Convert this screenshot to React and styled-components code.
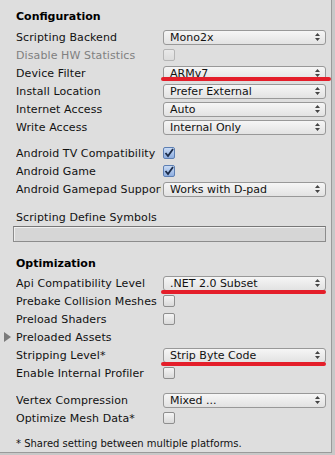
import React from "react";
import styled, { createGlobalStyle } from "styled-components";

// Global page styles
const GlobalStyle = createGlobalStyle`
  body {
    margin: 0;
    background: #c8c8c8;
    font-family: "DejaVu Sans", Verdana, sans-serif;
  }
`;

const Panel = styled.div`
  width: 332px;
  height: 453px;
  box-sizing: border-box;
  background: #dedede;
  border-right: 1px solid #9a9a9a;
  border-bottom: 1px solid #9a9a9a;
  padding: 8px 5px 0 16px;
  font-size: 11px;
  color: #111;
`;

const Group = styled.div`
  margin-top: ${({ $gap }) => $gap || 0}px;
`;

const Header = styled.div`
  height: 18px;
  line-height: 18px;
  font-weight: bold;
  color: #000;
`;

const Row = styled.div`
  position: relative;
  display: grid;
  grid-template-columns: 147px 1fr;
  align-items: center;
  height: 18px;

  ${({ $fold }) =>
    $fold &&
    `
    &::before {
      content: "";
      position: absolute;
      left: -12px;
      top: 4px;
      border-left: 7px solid #7a7a7a;
      border-top: 5px solid transparent;
      border-bottom: 5px solid transparent;
    }
  `}
`;

const Label = styled.div`
  min-width: 0;
  max-width: 145px;
  white-space: nowrap;
  overflow: hidden;
  letter-spacing: 0.1px;
  color: ${({ $disabled }) => ($disabled ? "#808080" : "#111")};
`;

const Popup = styled.div`
  display: flex;
  align-items: center;
  justify-content: space-between;
  height: 15px;
  box-sizing: border-box;
  border: 1px solid #989898;
  border-radius: 3px;
  background: linear-gradient(#f6f6f6, #e2e2e2);
  padding: 0 5px 0 6px;
  color: #111;
  font-size: 11px;
  white-space: nowrap;
`;

const Box = styled.div`
  width: 12px;
  height: 12px;
  box-sizing: border-box;
  border: 1px solid ${({ $on }) => ($on ? "#5d7fb3" : "#8e8e8e")};
  border-radius: 2px;
  background: ${({ $on }) =>
    $on ? "linear-gradient(#c9dbf4, #8eaee0)" : "linear-gradient(#f4f4f4, #dadada)"};
  opacity: ${({ $disabled }) => ($disabled ? 0.5 : 1)};
  display: flex;
  align-items: center;
  justify-content: center;
`;

const TextField = styled.div`
  height: 16px;
  box-sizing: border-box;
  margin-left: -3px;
  border: 1px solid #8c8c8c;
  border-top-color: #777;
  box-shadow: inset 0 1px 0 #f0f0f0, inset 1px 0 0 #eeeeee;
  background: #d6d6d6;
`;

const Marker = styled.div`
  position: absolute;
  left: 145px;
  right: ${({ $right }) => $right}px;
  top: ${({ $top }) => $top}px;
  height: 4px;
  border-radius: 2px;
  background: #e41e2a;
`;

const Note = styled.div`
  height: 14px;
  line-height: 14px;
  font-size: 10px;
  color: #111;
`;

function Arrows() {
  return (
    <svg width="5" height="8" viewBox="0 0 5 8">
      <path d="M2.5 0 L5 3 L0 3 Z M2.5 8 L5 5 L0 5 Z" fill="#444" />
    </svg>
  );
}

function Check() {
  return (
    <svg width="10" height="10" viewBox="0 0 10 10">
      <path d="M1.5 5 L4 8 L9 1" fill="none" stroke="#1b2c4a" strokeWidth="1.8" />
    </svg>
  );
}

function PopupRow({ label, value, marker }) {
  return (
    <Row>
      <Label>{label}</Label>
      <Popup>
        <span>{value}</span>
        <Arrows />
      </Popup>
      {marker}
    </Row>
  );
}

function CheckRow({ label, on, disabled }) {
  return (
    <Row>
      <Label $disabled={disabled}>{label}</Label>
      <Box $on={on} $disabled={disabled}>
        {on && <Check />}
      </Box>
    </Row>
  );
}

export default function App() {
  return (
    <>
      <GlobalStyle />
      <Panel>
        <Header>Configuration</Header>
        <Group $gap={2}>
          <PopupRow label="Scripting Backend" value="Mono2x" />
          <CheckRow label="Disable HW Statistics" disabled />
          <PopupRow
            label="Device Filter"
            value="ARMv7"
            marker={<Marker $top={13} $right={-5} />}
          />
          <PopupRow label="Install Location" value="Prefer External" />
          <PopupRow label="Internet Access" value="Auto" />
          <PopupRow label="Write Access" value="Internal Only" />
        </Group>
        <Group $gap={8}>
          <CheckRow label="Android TV Compatibility" on />
          <CheckRow label="Android Game" on />
          <PopupRow label="Android Gamepad Support Level" value="Works with D-pad" />
        </Group>
        <Group $gap={10}>
          <Row>
            <Label>Scripting Define Symbols</Label>
          </Row>
          <TextField />
        </Group>
        <Group $gap={13}>
          <Header>Optimization</Header>
          <Group $gap={1}>
            <PopupRow
              label="Api Compatibility Level"
              value=".NET 2.0 Subset"
              marker={<Marker $top={16} $right={0} />}
            />
            <CheckRow label="Prebake Collision Meshes" />
            <CheckRow label="Preload Shaders" />
            <Row $fold>
              <Label>Preloaded Assets</Label>
            </Row>
            <PopupRow
              label="Stripping Level*"
              value="Strip Byte Code"
              marker={<Marker $top={16} $right={0} />}
            />
            <CheckRow label="Enable Internal Profiler" />
          </Group>
        </Group>
        <Group $gap={9}>
          <PopupRow label="Vertex Compression" value="Mixed ..." />
          <CheckRow label="Optimize Mesh Data*" />
        </Group>
        <Group $gap={10}>
          <Note>* Shared setting between multiple platforms.</Note>
        </Group>
      </Panel>
    </>
  );
}
